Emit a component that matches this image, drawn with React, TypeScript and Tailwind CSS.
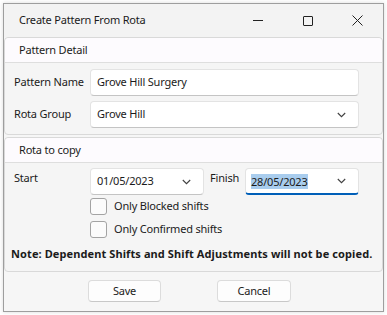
import React from "react";

const font = { fontFamily: '"Noto Sans", "Open Sans", sans-serif' };

function Chevron() {
  return (
    <svg width="9" height="6" viewBox="0 0 9 6" className="shrink-0">
      <path d="M0.8 1 L4.5 4.7 L8.2 1" fill="none" stroke="#404040" strokeWidth="1.1" />
    </svg>
  );
}

function Field({ value, chevron, width, focused }: { value: string; chevron?: boolean; width: string; focused?: boolean }) {
  return (
    <div
      className={`flex items-center justify-between bg-white rounded-[4px] border border-[#e3e3e3] ${
        focused ? "border-b-2 border-b-[#005fb8]" : "border-b-[#c4c4c4]"
      } pl-[6px] pr-[12px] h-[27px] ${width}`}
    >
      {focused ? (
        <span className="text-[11px] tracking-[-0.2px] text-[#1b1b1b] bg-[#a9cdee] leading-[15px] -ml-[1px]">{value}</span>
      ) : (
        <span className="text-[11px] tracking-[-0.2px] text-[#1b1b1b]">{value}</span>
      )}
      {chevron && <Chevron />}
    </div>
  );
}

function Check({ label }: { label: string }) {
  return (
    <div className="flex items-center gap-[7px] h-[17px]">
      <div className="w-[17px] h-[17px] rounded-[3px] border border-[#a3a3a3] bg-[#fbfbfb]" />
      <span className="text-[11px] tracking-[-0.2px] text-[#1b1b1b]">{label}</span>
    </div>
  );
}

function PanelHeader({ title }: { title: string }) {
  return (
    <div className="h-[25px] flex items-center pl-[14px] bg-[#fdfbfe] border-b border-[#dedede] rounded-t-[4px] text-[11px] tracking-[-0.2px] text-[#1b1b1b]">
      {title}
    </div>
  );
}

const label = "text-[11px] tracking-[-0.2px] text-[#1b1b1b] whitespace-nowrap";

export default function App() {
  return (
    <div className="w-[387px] h-[315px] bg-white pt-[3px] pl-[3px]" style={font}>
      <div className="w-[381px] h-[309px] border border-[#9e9e9e] bg-[#f6f6f6] flex flex-col shadow-[0_0_4px_rgba(0,0,0,0.15)]">
        {/* title bar */}
        <div className="h-[33px] flex items-center bg-[#f3f3f3] shrink-0">
          <span className={`pl-[15px] flex-1 ${label}`}>Create Pattern From Rota</span>
          <div className="flex items-center">
            <div className="w-[50px] flex justify-center">
              <div className="w-[10px] h-[1px] bg-[#222]" />
            </div>
            <div className="w-[50px] flex justify-center">
              <div className="w-[10px] h-[10px] border border-[#222] rounded-[1px]" />
            </div>
            <div className="w-[50px] flex justify-center pr-[1px]">
              <svg width="11" height="11" viewBox="0 0 11 11">
                <path d="M0.5 0.5 L10.5 10.5 M10.5 0.5 L0.5 10.5" stroke="#222" strokeWidth="1" />
              </svg>
            </div>
          </div>
        </div>

        {/* Pattern Detail */}
        <div className="border border-[#d9d9d9] rounded-[4px] bg-[#f5f5f5]">
          <PanelHeader title="Pattern Detail" />
          <div className="pt-[6px] pb-[6px] pl-[9px] pr-[23px] flex flex-col gap-[5px]">
            <div className="flex items-center">
              <span className={`w-[76px] ${label}`}>Pattern Name</span>
              <Field value="Grove Hill Surgery" width="flex-1" />
            </div>
            <div className="flex items-center">
              <span className={`w-[76px] ${label}`}>Rota Group</span>
              <Field value="Grove Hill" chevron width="flex-1" />
            </div>
          </div>
        </div>

        {/* Rota to copy */}
        <div className="mt-[2px] border border-[#d9d9d9] rounded-[4px] bg-[#f5f5f5]">
          <PanelHeader title="Rota to copy" />
          <div className="pt-[5px] pb-[8px] pl-[9px] pr-[23px]">
            <div className="flex items-start">
              <span className={`w-[76px] pt-[2px] ${label}`}>Start</span>
              <Field value="01/05/2023" chevron width="w-[114px]" />
              <span className={`w-[41px] pl-[6px] pt-[2px] ${label}`}>Finish</span>
              <Field value="28/05/2023" chevron focused width="w-[114px]" />
            </div>
            <div className="pl-[76px] flex flex-col gap-[6px] mt-[3px]">
              <Check label="Only Blocked shifts" />
              <Check label="Only Confirmed shifts" />
            </div>
            <div className="mt-[8px] -ml-[3px] -mr-[13px] text-center text-[11px] tracking-[0.1px] font-bold text-[#1b1b1b] whitespace-nowrap">
              Note: Dependent Shifts and Shift Adjustments will not be copied.
            </div>
          </div>
        </div>

        {/* buttons */}
        <div className="flex-1 flex items-center pl-[84px] gap-[56px] pb-[1px]">
          <button className="w-[73px] h-[22px] bg-[#fdfdfd] border border-[#dcdcdc] border-b-[#c8c8c8] rounded-[4px] text-[11px] tracking-[-0.2px] text-[#1b1b1b]">
            Save
          </button>
          <button className="w-[74px] h-[22px] bg-[#fdfdfd] border border-[#dcdcdc] border-b-[#c8c8c8] rounded-[4px] text-[11px] tracking-[-0.2px] text-[#1b1b1b]">
            Cancel
          </button>
        </div>
      </div>
    </div>
  );
}
